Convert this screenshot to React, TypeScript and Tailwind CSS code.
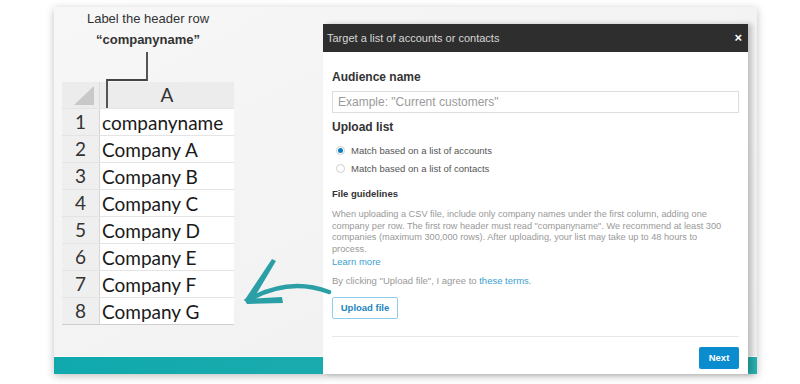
import React from 'react';

const rows = ['companyname', 'Company A', 'Company B', 'Company C', 'Company D', 'Company E', 'Company F', 'Company G'];

function Sheet() {
  return (
    <div className="w-[172px] font-['Lato',sans-serif] text-[19px] text-[#1a1a1a]">
      <div className="flex h-[26px] bg-[#ececec]">
        <div className="w-[38px] relative border-r border-[#dcdcdc]">
          <svg width="38" height="26" className="absolute inset-0">
            <polygon points="32,4 32,23 12,23" fill="#c8c8c8" />
          </svg>
        </div>
        <div className="flex-1 flex items-center justify-center text-[19px] text-[#333]">A</div>
      </div>
      {rows.map((r, i) => (
        <div key={r} className="flex h-[27px] border-t border-[#e4e4e4]">
          <div className="w-[38px] bg-[#efefef] border-r border-[#d6d6d6] flex items-center justify-center text-[#333]">
            {i + 1}
          </div>
          <div className="flex-1 bg-white flex items-center pl-[2px] leading-none">{r}</div>
        </div>
      ))}
      <div className="h-px bg-[#cfcfcf]" />
    </div>
  );
}

function Radio({ checked, label }: { checked?: boolean; label: string }) {
  return (
    <div className="flex items-center h-[18px] pl-[4px]">
      <span className="w-[9px] h-[9px] rounded-full border border-[#cfcfcf] bg-white flex items-center justify-center">
        {checked && <span className="w-[5px] h-[5px] rounded-full bg-[#0a7fc4]" />}
      </span>
      <span className="ml-[6px] text-[#555]">{label}</span>
    </div>
  );
}

function Dialog() {
  return (
    <div className="relative z-10 w-[425px] mt-[17px] flex flex-col bg-white shadow-[4px_0_5px_rgba(0,0,0,0.2)] font-['Liberation_Sans',Arial,sans-serif]">
      <div className="h-[28px] bg-[#2e2e2e] flex items-center justify-between pl-[4px] pr-[6px]">
        <span className="text-[11px] text-[#d6d6d6]">Target a list of accounts or contacts</span>
        <span className="text-[13px] font-bold text-white leading-none">×</span>
      </div>
      <div className="flex-1 flex flex-col px-[9px] text-[9.5px]">
        <div className="mt-[18px] text-[12px] font-bold text-[#333] leading-[14px]">Audience name</div>
        <div className="mt-[7px] h-[22px] border border-[#dedede] flex items-center px-[5px] text-[12px] text-[#9a9a9a]">
          Example: "Current customers"
        </div>
        <div className="mt-[7px] text-[12px] font-bold text-[#333] leading-[14px]">Upload list</div>
        <div className="mt-[8px] flex flex-col">
          <Radio checked label="Match based on a list of accounts" />
          <Radio label="Match based on a list of contacts" />
        </div>
        <div className="mt-[10px] font-bold text-[#333] leading-[12px]">File guidelines</div>
        <div className="mt-[9px] text-[9.2px] text-[#999] leading-[11.8px]">
          When uploading a CSV file, include only company names under the first column, adding one
          <br />
          company per row. The first row header must read "companyname". We recommend at least 300
          <br />
          companies (maximum 300,000 rows). After uploading, your list may take up to 48 hours to
          <br />
          process.
        </div>
        <div className="text-[#3b9fd0] leading-[12px]">Learn more</div>
        <div className="mt-[7px] text-[#999] leading-[12px]">
          By clicking "Upload file", I agree to <span className="text-[#3b9fd0]">these terms</span>.
        </div>
        <div className="mt-[10px] flex">
          <div className="h-[22px] w-[66px] border border-[#8ed0ea] rounded-[2px] flex items-center justify-center font-bold text-[#1d86c0]">
            Upload file
          </div>
        </div>
        <div className="mt-[17px] h-px bg-[#e8e8e8]" />
        <div className="mt-[10px] flex justify-end">
          <div className="h-[22px] w-[40px] bg-[#0b8ccf] rounded-[2px] flex items-center justify-center font-bold text-white">
            Next
          </div>
        </div>
        <div className="h-[5px]" />
      </div>
    </div>
  );
}

export default function App() {
  return (
    <div className="w-[800px] h-[384px] bg-white relative overflow-hidden pt-[7px] pl-[54px]">
      <div className="relative w-[703px] h-[367px] flex bg-gradient-to-br from-[#f7f7f7] to-[#efefef] shadow-[0_2px_8px_rgba(0,0,0,0.25)]">
        <div className="absolute left-0 right-0 bottom-0 h-[18px] border-t border-[#fafafa] bg-gradient-to-r from-[#0fa9ad] to-[#27aeb0]" />
        <div className="relative w-[269px] pl-[8px] flex flex-col">
          <div className="w-[172px] mt-[4px] flex flex-col items-center font-['Liberation_Sans',Arial,sans-serif] text-[13px] text-[#333]">
            <div className="leading-[15px]">Label the header row</div>
            <div className="mt-[6px] leading-[15px] font-bold">“companyname”</div>
          </div>
          <svg width="172" height="60" className="absolute left-[8px] top-[44px]">
            <path d="M85 1 V29 H45 V57" fill="none" stroke="#444" strokeWidth="1.8" />
          </svg>
          <div className="mt-[35px]">
            <Sheet />
          </div>
        </div>
        <Dialog />
      </div>
      <svg width="100" height="60" className="absolute left-[240px] top-[252px] z-20">
        <g transform="translate(-240,-252)">
          <path d="M250 299 Q 290 277 329 292" fill="none" stroke="#2a9fa5" strokeWidth="4.5" strokeLinecap="round" />
          <polygon points="244,301 272,259 276,261 254,298" fill="#2a9fa5" />
          <polygon points="244,299 282,297 283,303 247,304" fill="#2a9fa5" />
        </g>
      </svg>
    </div>
  );
}
